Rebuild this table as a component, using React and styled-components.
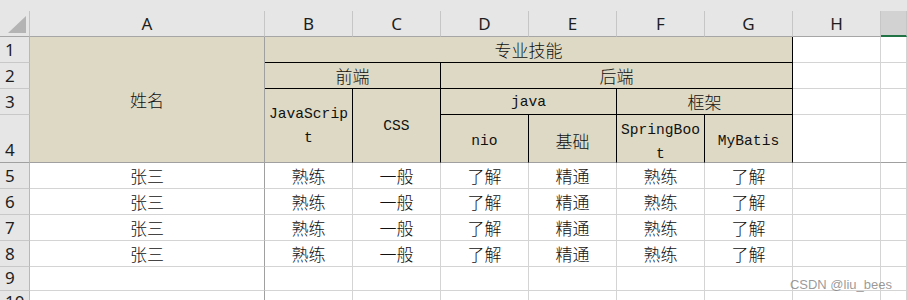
import React from 'react';
import styled, { createGlobalStyle } from 'styled-components';

const TAN = '#ddd9c4';
const GRID = '#d4d4d4';
const FREEZE = '#a0a0a0';
const INK = '#000';

const GlobalStyle = createGlobalStyle`
  html, body {
    margin: 0;
    padding: 0;
    background: #fff;
    overflow: hidden;
  }
`;

const Sheet = styled.div`
  position: relative;
  width: 907px;
  height: 300px;
  overflow: hidden;
  display: flex;
  flex-direction: column;
  background: #fff;
`;

const TopBand = styled.div`
  flex: none;
  height: 11px;
  background: #e6e6e6;
`;

const Grid = styled.div`
  display: grid;
  grid-template-columns: 30px 235px repeat(7, 88px) 1fr;
  grid-template-rows: 26px 26px 26px 26px 48px repeat(4, 26px) 24px 24px;
`;

const Corner = styled.div`
  display: flex;
  align-items: flex-end;
  justify-content: flex-end;
  padding: 0 3px 3px 0;
  background: #e6e6e6;
  border-right: 1px solid #c4c4c4;
  border-bottom: 1px solid #a6a6a6;
`;

const ColHead = styled.div`
  display: flex;
  align-items: center;
  justify-content: center;
  background: ${p => (p.$active ? '#d2d2d2' : '#e6e6e6')};
  border-right: 1px solid #c6c6c6;
  border-bottom: ${p => (p.$active ? '2px solid #217346' : '1px solid #a6a6a6')};
  font-family: 'Noto Sans', 'Liberation Sans', sans-serif;
  font-size: 17px;
  color: #1e1e1e;
`;

const RowHead = styled.div`
  display: flex;
  align-items: flex-end;
  padding-left: 5px;
  background: #e6e6e6;
  border-right: 1px solid #b8b8b8;
  border-bottom: 1px solid ${p => p.$b || '#c8c8c8'};
  font-family: 'Noto Sans', 'Liberation Sans', sans-serif;
  font-size: 17px;
  line-height: 24px;
  color: #1e1e1e;
`;

const Cell = styled.div`
  grid-column: span ${p => p.$cs || 1};
  grid-row: span ${p => p.$rs || 1};
  display: flex;
  align-items: center;
  justify-content: center;
  text-align: center;
  padding-top: ${p => p.$pt || 0}px;
  background: ${p => (p.$tan ? TAN : '#fff')};
  border-right: 1px solid ${p => p.$r || GRID};
  border-bottom: 1px solid ${p => p.$b || GRID};
  font-family: 'Noto Sans CJK SC', sans-serif;
  font-weight: 300;
  font-size: 17px;
  line-height: 24px;
  color: #111;
`;

const Latin = styled.span`
  font-family: 'Liberation Mono', monospace;
  font-weight: 400;
  font-size: 14.6px;
`;

const Watermark = styled.span`
  position: absolute;
  right: 15px;
  bottom: 8px;
  font-family: 'Liberation Sans', Arial, sans-serif;
  font-size: 13px;
  color: rgba(120, 120, 120, 0.75);
`;

const LETTERS = ['A', 'B', 'C', 'D', 'E', 'F', 'G', 'H'];
const SKILLS = ['熟练', '一般', '了解', '精通', '熟练', '了解'];
const PEOPLE = ['张三', '张三', '张三', '张三'];

function CornerMark() {
  return (
    <svg width="18" height="17" viewBox="0 0 18 17">
      <polygon points="18,0 18,17 0,17" fill="#b4b4b4" />
    </svg>
  );
}

function EmptyTail({ b }) {
  return (
    <>
      <Cell $b={b} />
      <Cell $b={b} />
    </>
  );
}

export default function App() {
  return (
    <Sheet>
      <GlobalStyle />
      <TopBand />
      <Grid>
        <Corner>
          <CornerMark />
        </Corner>
        {LETTERS.map(l => (
          <ColHead key={l}>{l}</ColHead>
        ))}
        <ColHead $active />

        {/* row 1 */}
        <RowHead>1</RowHead>
        <Cell $tan $rs={4} $r={FREEZE} $b={FREEZE}>姓名</Cell>
        <Cell $tan $cs={6} $r={INK} $b={INK}>专业技能</Cell>
        <EmptyTail />

        {/* row 2 */}
        <RowHead>2</RowHead>
        <Cell $tan $cs={2} $r={INK} $b={INK}>前端</Cell>
        <Cell $tan $cs={4} $r={INK} $b={INK}>后端</Cell>
        <EmptyTail />

        {/* row 3 */}
        <RowHead>3</RowHead>
        <Cell $tan $rs={2} $r={INK} $b={FREEZE}>
          <Latin>
            JavaScrip
            <br />t
          </Latin>
        </Cell>
        <Cell $tan $rs={2} $r={INK} $b={FREEZE}>
          <Latin>CSS</Latin>
        </Cell>
        <Cell $tan $cs={2} $r={INK} $b={INK}>
          <Latin>java</Latin>
        </Cell>
        <Cell $tan $cs={2} $r={INK} $b={INK}>框架</Cell>
        <EmptyTail />

        {/* row 4 */}
        <RowHead $b={FREEZE}>4</RowHead>
        <Cell $tan $pt={4} $r={INK} $b={FREEZE}>
          <Latin>nio</Latin>
        </Cell>
        <Cell $tan $pt={4} $r={INK} $b={FREEZE}>基础</Cell>
        <Cell $tan $pt={6} $r={INK} $b={FREEZE}>
          <Latin>
            SpringBoo
            <br />t
          </Latin>
        </Cell>
        <Cell $tan $pt={4} $r={INK} $b={FREEZE}>
          <Latin>MyBatis</Latin>
        </Cell>
        <EmptyTail b={FREEZE} />

        {PEOPLE.map((name, i) => (
          <React.Fragment key={i}>
            <RowHead>{i + 5}</RowHead>
            <Cell $r={FREEZE}>{name}</Cell>
            {SKILLS.map((s, j) => (
              <Cell key={j}>{s}</Cell>
            ))}
            <EmptyTail />
          </React.Fragment>
        ))}

        {[9, 10].map(n => (
          <React.Fragment key={n}>
            <RowHead>{n}</RowHead>
            <Cell $r={FREEZE} />
            {SKILLS.map((s, j) => (
              <Cell key={j} />
            ))}
            <EmptyTail />
          </React.Fragment>
        ))}
      </Grid>
      <Watermark>CSDN @liu_bees</Watermark>
    </Sheet>
  );
}
